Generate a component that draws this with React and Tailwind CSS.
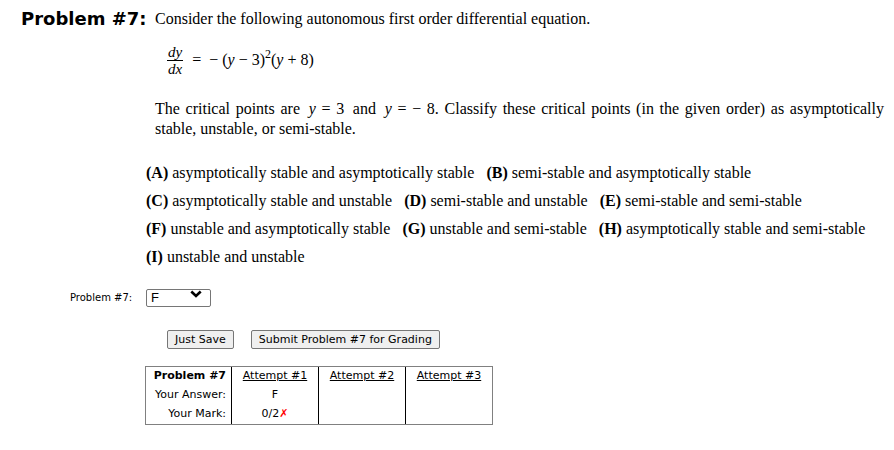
import { useState } from 'react';

const serif = { fontFamily: '"Liberation Serif", "Times New Roman", serif' };

const rows = [
  [
    ['A', 'asymptotically stable and asymptotically stable'],
    ['B', 'semi-stable and asymptotically stable'],
  ],
  [
    ['C', 'asymptotically stable and unstable'],
    ['D', 'semi-stable and unstable'],
    ['E', 'semi-stable and semi-stable'],
  ],
  [
    ['F', 'unstable and asymptotically stable'],
    ['G', 'unstable and semi-stable'],
    ['H', 'asymptotically stable and semi-stable'],
  ],
  [['I', 'unstable and unstable']],
];

function Y() {
  return <i>y</i>;
}

export default function App() {
  const [answer, setAnswer] = useState('F');

  return (
    <div className="min-h-screen bg-white text-black font-['DejaVu_Sans',Verdana,sans-serif]">
      {/* question */}
      <div className="flex pt-[8px]">
        <div className="w-[155px] shrink-0 pl-[21px] text-[18px] font-bold leading-[22px]">
          Problem #7:
        </div>
        <div className="w-[729px] text-[16px] leading-[22px]" style={serif}>
          <div>Consider the following autonomous first order differential equation.</div>

          <div className="flex items-center mt-[10px] ml-[12px] h-[40px]">
            <div className="flex flex-col items-center text-[15px] leading-[16px] italic">
              <span className="px-[1px] border-b border-black">dy</span>
              <span className="px-[1px]">dx</span>
            </div>
            <div className="ml-[9px] whitespace-pre">
              {'=  − ('}<Y />{' − 3)'}
              <sup className="text-[12px] align-baseline relative -top-[7px]">2</sup>
              {'('}<Y />{' + 8)'}
            </div>
          </div>

          <p className="mt-[19px] leading-[20px] text-justify">
            The critical points are <span className="mx-[3px]"><Y /> = 3</span> and{' '}
            <span className="ml-[3px]"><Y /> = − 8</span>. Classify these critical points (in the
            given order) as asymptotically stable, unstable, or semi-stable.
          </p>
        </div>
      </div>

      {/* choices */}
      <div className="ml-[146px] mt-[20px] text-[16px] leading-[28px]" style={serif}>
        {rows.map((row, i) => (
          <div key={i} className="flex gap-[12px]">
            {row.map(([letter, text]) => (
              <span key={letter}>
                <b>({letter})</b> {text}
              </span>
            ))}
          </div>
        ))}
      </div>

      {/* answer select */}
      <div className="flex items-center mt-[17px] h-[18px]">
        <label className="w-[146px] pl-[70px] text-[10px]">Problem #7:</label>
        <div className="relative">
          <select
            value={answer}
            onChange={(e) => setAnswer(e.target.value)}
            className="appearance-none w-[65px] h-[18px] border border-[#767676] rounded-[2px] bg-white pl-[4px] text-[13px] leading-[16px] font-['Liberation_Sans',Arial,sans-serif]"
          >
            {['A', 'B', 'C', 'D', 'E', 'F', 'G', 'H', 'I'].map((l) => (
              <option key={l}>{l}</option>
            ))}
          </select>
          <svg
            className="absolute right-[9px] top-[5px] pointer-events-none"
            width="12"
            height="8"
            viewBox="0 0 12 8"
          >
            <path d="M1.3 1.5 L6 6 L10.7 1.5" fill="none" stroke="#000" strokeWidth="2.6" />
          </svg>
        </div>
      </div>

      {/* buttons */}
      <div className="flex gap-[17px] ml-[167px] mt-[24px]">
        <button className="h-[19px] px-[7px] border border-[#767676] rounded-[2px] bg-[#efefef] text-[11px] leading-[17px]">
          Just Save
        </button>
        <button className="h-[19px] px-[7px] border border-[#767676] rounded-[2px] bg-[#efefef] text-[11px] leading-[17px]">
          Submit Problem #7 for Grading
        </button>
      </div>

      {/* attempts */}
      <table className="ml-[145px] mt-[17px] border border-[#808080] border-separate border-spacing-0 text-[11px]">
        <tbody>
          <tr className="h-[19px]">
            <th className="w-[85px] pr-[5px] text-right font-bold">Problem #7</th>
            <th className="w-[87px] border-l border-black font-normal underline">Attempt #1</th>
            <th className="w-[87px] border-l border-black font-normal underline">Attempt #2</th>
            <th className="w-[87px] border-l border-black font-normal underline">Attempt #3</th>
          </tr>
          <tr className="h-[19px]">
            <td className="pr-[5px] text-right">Your Answer:</td>
            <td className="border-l border-black text-center">F</td>
            <td className="border-l border-black"></td>
            <td className="border-l border-black"></td>
          </tr>
          <tr className="h-[19px]">
            <td className="pr-[5px] text-right">Your Mark:</td>
            <td className="border-l border-black text-center">
              0/2<span className="text-[#ff0000]">✗</span>
            </td>
            <td className="border-l border-black"></td>
            <td className="border-l border-black"></td>
          </tr>
        </tbody>
      </table>
    </div>
  );
}
